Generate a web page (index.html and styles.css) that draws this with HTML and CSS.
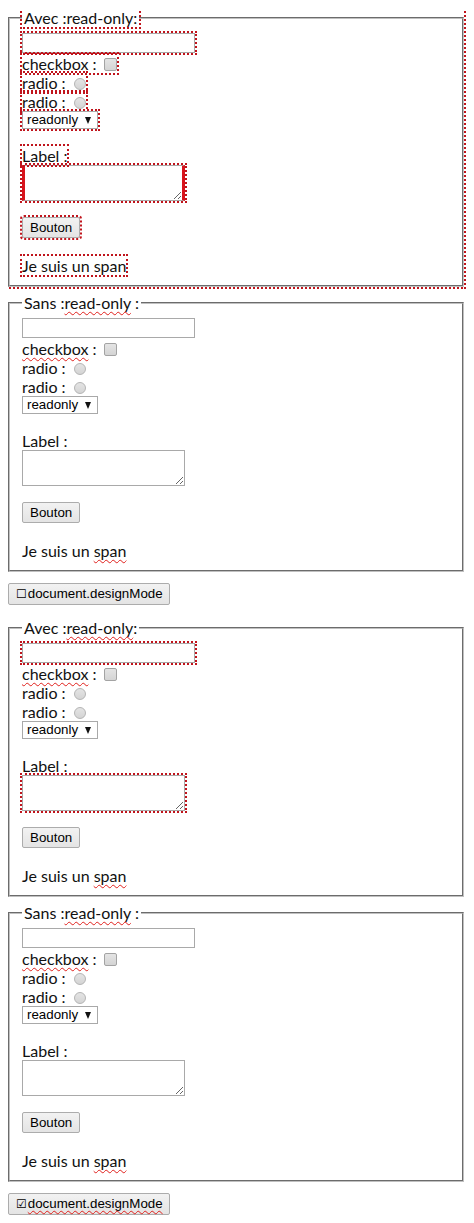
FILE: index.html
```html
<!DOCTYPE html>
<html lang="fr">
<head>
<meta charset="utf-8">
<title>:read-only</title>
<link rel="stylesheet" href="styles.css">
</head>
<body>

<fieldset class="fs ro">
  <legend class="lg">Avec :read-only:</legend>
  <div class="row row-input"><input class="txt" type="text" readonly></div>
  <div class="row"><label class="lbl">checkbox : <input class="cb" type="checkbox"></label></div>
  <div class="row"><label class="lbl">radio : <input class="rd" type="radio" name="a"></label></div>
  <div class="row"><label class="lbl">radio : <input class="rd" type="radio" name="a"></label></div>
  <div class="row row-sel"><span class="selwrap"><select class="sel"><option>readonly</option></select></span></div>
  <div class="blk blk-ta"><label class="lbl">Label :</label><textarea class="ta ta-red" readonly></textarea></div>
  <div class="blk"><button class="btn" type="button">Bouton</button></div>
  <div class="blk blk-span"><span class="sp">Je suis un span</span></div>
</fieldset>

<fieldset class="fs">
  <legend class="lg">Sans :<span class="sq">read-only</span> :</legend>
  <div class="row row-input"><input class="txt" type="text"></div>
  <div class="row"><label class="lbl"><span class="sq">checkbox</span> : <input class="cb" type="checkbox"></label></div>
  <div class="row"><label class="lbl">radio : <input class="rd" type="radio" name="b"></label></div>
  <div class="row"><label class="lbl">radio : <input class="rd" type="radio" name="b"></label></div>
  <div class="row row-sel"><span class="selwrap"><select class="sel"><option>readonly</option></select></span></div>
  <div class="blk blk-ta"><label class="lbl">Label :</label><textarea class="ta"></textarea></div>
  <div class="blk"><button class="btn" type="button">Bouton</button></div>
  <div class="blk blk-span"><span class="sp">Je suis un <span class="sq">span</span></span></div>
</fieldset>

<div class="toggle"><button class="btn btn-mode" type="button"><span class="box">&#9744;</span>document.designMode</button></div>

<fieldset class="fs dm">
  <legend class="lg">Avec :<span class="sq">read-only</span>:</legend>
  <div class="row row-input"><input class="txt txt-ro" type="text" readonly></div>
  <div class="row"><label class="lbl"><span class="sq">checkbox</span> : <input class="cb" type="checkbox"></label></div>
  <div class="row"><label class="lbl">radio : <input class="rd" type="radio" name="c"></label></div>
  <div class="row"><label class="lbl">radio : <input class="rd" type="radio" name="c"></label></div>
  <div class="row row-sel"><span class="selwrap"><select class="sel"><option>readonly</option></select></span></div>
  <div class="blk blk-ta"><label class="lbl">Label :</label><textarea class="ta ta-ro" readonly></textarea></div>
  <div class="blk"><button class="btn" type="button">Bouton</button></div>
  <div class="blk blk-span"><span class="sp">Je suis un <span class="sq">span</span></span></div>
</fieldset>

<fieldset class="fs dm">
  <legend class="lg">Sans :<span class="sq">read-only</span> :</legend>
  <div class="row row-input"><input class="txt" type="text"></div>
  <div class="row"><label class="lbl"><span class="sq">checkbox</span> : <input class="cb" type="checkbox"></label></div>
  <div class="row"><label class="lbl">radio : <input class="rd" type="radio" name="d"></label></div>
  <div class="row"><label class="lbl">radio : <input class="rd" type="radio" name="d"></label></div>
  <div class="row row-sel"><span class="selwrap"><select class="sel"><option>readonly</option></select></span></div>
  <div class="blk blk-ta"><label class="lbl">Label :</label><textarea class="ta"></textarea></div>
  <div class="blk"><button class="btn" type="button">Bouton</button></div>
  <div class="blk blk-span"><span class="sp">Je suis un <span class="sq">span</span></span></div>
</fieldset>

<div class="toggle"><button class="btn btn-mode" type="button"><span class="box">&#9745;</span><span class="sq">document.designMode</span></button></div>

</body>
</html>
```

FILE: styles.css
```css
* {
  box-sizing: border-box;
}

body {
  margin: 8px;
  font-family: Lato, "Open Sans", sans-serif;
  font-size: 16px;
  line-height: 19px;
  color: #111;
  background: #fff;
}

.fs {
  display: block;
  margin: 0 2px 6px 0;
  padding: 5px 12px 10px;
  border: 2px groove #c0c0c0;
  min-width: 0;
}

.lg {
  padding: 0 2px;
  line-height: 19px;
}

.row {
  height: 19px;
  line-height: 19px;
}

.row-input {
  height: 22px;
  padding-top: 1px;
}

.row-sel {
  height: 19px;
}

.txt {
  display: block;
  width: 173px;
  height: 20px;
  margin: 0;
  padding: 1px 2px;
  border: 1px solid #a9a9a9;
  background: #fff;
  font: 13.33px "Liberation Sans", Arial, sans-serif;
}

.cb,
.rd {
  appearance: none;
  -webkit-appearance: none;
  display: inline-block;
  width: 13px;
  height: 13px;
  margin: 0 0 0 3px;
  vertical-align: -1px;
  border: 1px solid #a3a3a3;
  background: linear-gradient(#e4e4e4, #d4d4d4);
}

.cb {
  border-radius: 2px;
}

.rd {
  width: 12px;
  height: 12px;
  border-radius: 50%;
  border-color: #b4b4b4;
  margin-left: 4px;
}

.selwrap {
  position: relative;
  display: inline-block;
  vertical-align: top;
}

.selwrap::after {
  content: "";
  position: absolute;
  right: 7px;
  top: 6px;
  border-left: 3.5px solid transparent;
  border-right: 3.5px solid transparent;
  border-top: 7px solid #111;
  pointer-events: none;
}

.sel {
  appearance: none;
  -webkit-appearance: none;
  display: block;
  width: 76px;
  height: 18px;
  margin: 0;
  padding: 0 0 0 4px;
  border: 1px solid #a9a9a9;
  border-radius: 0;
  background: #fff;
  color: #000;
  font: 13.33px "Liberation Sans", Arial, sans-serif;
  line-height: 16px;
}

.blk {
  margin: 16px 0 0;
}

.blk-ta .lbl {
  display: inline-block;
}

.ta {
  display: block;
  width: 163px;
  height: 36px;
  margin: 0;
  padding: 2px;
  border: 1px solid #a9a9a9;
  background: #fff;
  font: 13.33px "Liberation Mono", monospace;
  resize: both;
}

.btn {
  display: block;
  height: 21px;
  margin: 0;
  padding: 0 7px;
  border: 1px solid #acacac;
  border-radius: 2px;
  background: linear-gradient(#f2f2f2, #e4e4e4);
  color: #000;
  font: 13.33px "Liberation Sans", Arial, sans-serif;
  line-height: 19px;
}

.blk-span {
  margin-top: 18px;
}

.toggle {
  margin: 11px 0 13px;
}

.btn-mode {
  height: 22px;
  padding: 0 6px 0 7px;
}

.box {
  font-family: "DejaVu Sans", sans-serif;
  font-size: 12px;
  margin-right: 1px;
}

.sq {
  text-decoration: underline wavy #e0201c;
  text-decoration-thickness: 1px;
  text-underline-offset: 2px;
  text-decoration-skip-ink: none;
}

/* first fieldset: everything read-only gets an outline */
.ro,
.ro .lg,
.ro .txt,
.ro .lbl,
.ro .sel,
.ro .ta,
.ro .btn,
.ro .sp {
  outline: 2px dotted #c0141c;
}

.ro .ta-red {
  border-left: 3px solid #d8141c;
  border-right: 3px solid #d8141c;
}

/* design mode: only real readonly fields */
.dm .txt-ro,
.dm .ta-ro {
  outline: 2px dotted #c0141c;
}
```
